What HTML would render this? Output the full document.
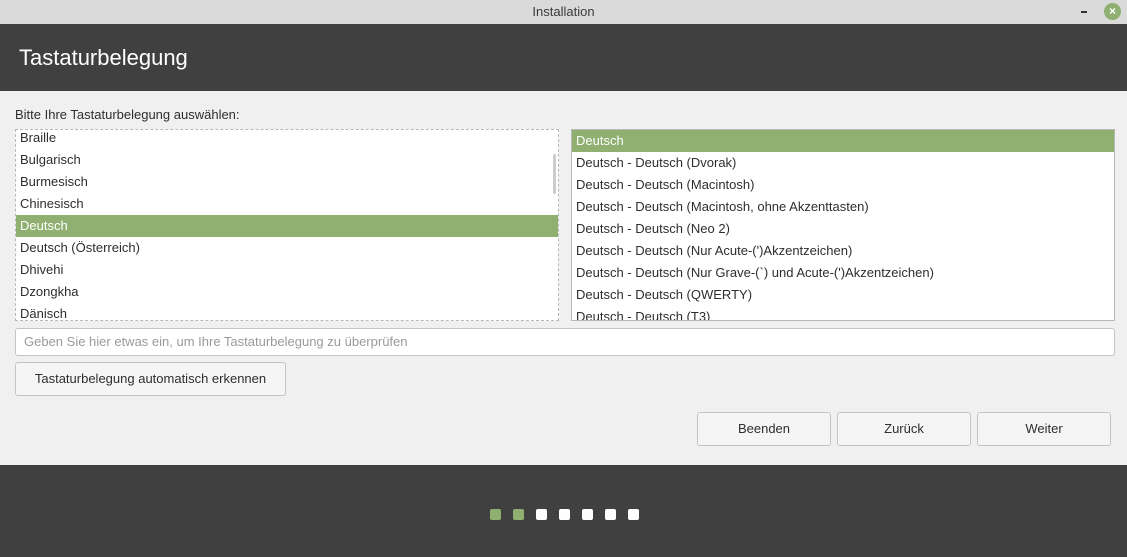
<!DOCTYPE html>
<html><head><meta charset="utf-8"><style>
*{margin:0;padding:0;box-sizing:border-box}
body{width:1127px;height:557px;overflow:hidden;background:#f0f0f0;font-family:"Liberation Sans","DejaVu Sans",sans-serif;font-size:13px;color:#2e2e2e;position:relative}
.abs{position:absolute}
.tb{left:0;top:0;width:1127px;height:24px;background:#dadada;text-align:center;line-height:24px;font-size:13px;color:#3a3a3a}
.hd{left:0;top:24px;width:1127px;height:67px;background:#404040;color:#fff;font-size:22px;padding-left:19px;line-height:67px}
.ft{left:0;top:465px;width:1127px;height:92px;background:#404040}
.list{background:#fff;border:1px solid #b8b8b8;overflow:hidden}
.row{height:22px;line-height:22px;padding-left:4px;white-space:nowrap}
.sel{background:#8fb071;color:#fff}
.btn{background:#f5f5f5;border:1px solid #c4c4c4;border-radius:3px;text-align:center;line-height:31px;color:#2e2e2e}
.dot{top:509px;width:11px;height:11px;border-radius:2px;background:#fff}
</style></head><body>
<div class="abs tb">Installation</div>
<div class="abs" style="left:1081px;top:11px;width:6px;height:2px;background:#333"></div>
<div class="abs" style="left:1104px;top:3px;width:17px;height:17px;border-radius:50%;background:#8fb071;color:#fff;font-size:12px;line-height:17px;text-align:center;font-weight:bold">×</div>
<div class="abs hd">Tastaturbelegung</div>
<div class="abs" style="left:15px;top:107px">Bitte Ihre Tastaturbelegung auswählen:</div>
<div class="abs list" style="left:15px;top:129px;width:544px;height:192px;border-style:dashed">
<div style="margin-top:-3px">
<div class="row">Braille</div><div class="row">Bulgarisch</div><div class="row">Burmesisch</div><div class="row">Chinesisch</div><div class="row sel">Deutsch</div><div class="row">Deutsch (Österreich)</div><div class="row">Dhivehi</div><div class="row">Dzongkha</div><div class="row">Dänisch</div></div>
<div class="abs" style="left:537px;top:24px;width:3px;height:40px;background:#ccc;border-radius:2px"></div>
</div>
<div class="abs list" style="left:571px;top:129px;width:544px;height:192px">
<div class="row sel">Deutsch</div><div class="row">Deutsch - Deutsch (Dvorak)</div><div class="row">Deutsch - Deutsch (Macintosh)</div><div class="row">Deutsch - Deutsch (Macintosh, ohne Akzenttasten)</div><div class="row">Deutsch - Deutsch (Neo 2)</div><div class="row">Deutsch - Deutsch (Nur Acute-(')Akzentzeichen)</div><div class="row">Deutsch - Deutsch (Nur Grave-(`) und Acute-(')Akzentzeichen)</div><div class="row">Deutsch - Deutsch (QWERTY)</div><div class="row">Deutsch - Deutsch (T3)</div>
</div>
<div class="abs" style="left:15px;top:328px;width:1100px;height:28px;background:#fff;border:1px solid #c4c4c4;border-radius:3px;padding-left:8px;line-height:26px;color:#9a9a9a">Geben Sie hier etwas ein, um Ihre Tastaturbelegung zu überprüfen</div>
<div class="abs btn" style="left:15px;top:362px;width:271px;height:34px">Tastaturbelegung automatisch erkennen</div>
<div class="abs btn" style="left:697px;top:412px;width:134px;height:34px">Beenden</div>
<div class="abs btn" style="left:837px;top:412px;width:134px;height:34px">Zurück</div>
<div class="abs btn" style="left:977px;top:412px;width:134px;height:34px">Weiter</div>
<div class="abs ft"></div>
<div class="abs dot" style="left:490px;background:#8fb071"></div>
<div class="abs dot" style="left:513px;background:#8fb071"></div>
<div class="abs dot" style="left:536px"></div>
<div class="abs dot" style="left:559px"></div>
<div class="abs dot" style="left:582px"></div>
<div class="abs dot" style="left:605px"></div>
<div class="abs dot" style="left:628px"></div>
</body></html>
